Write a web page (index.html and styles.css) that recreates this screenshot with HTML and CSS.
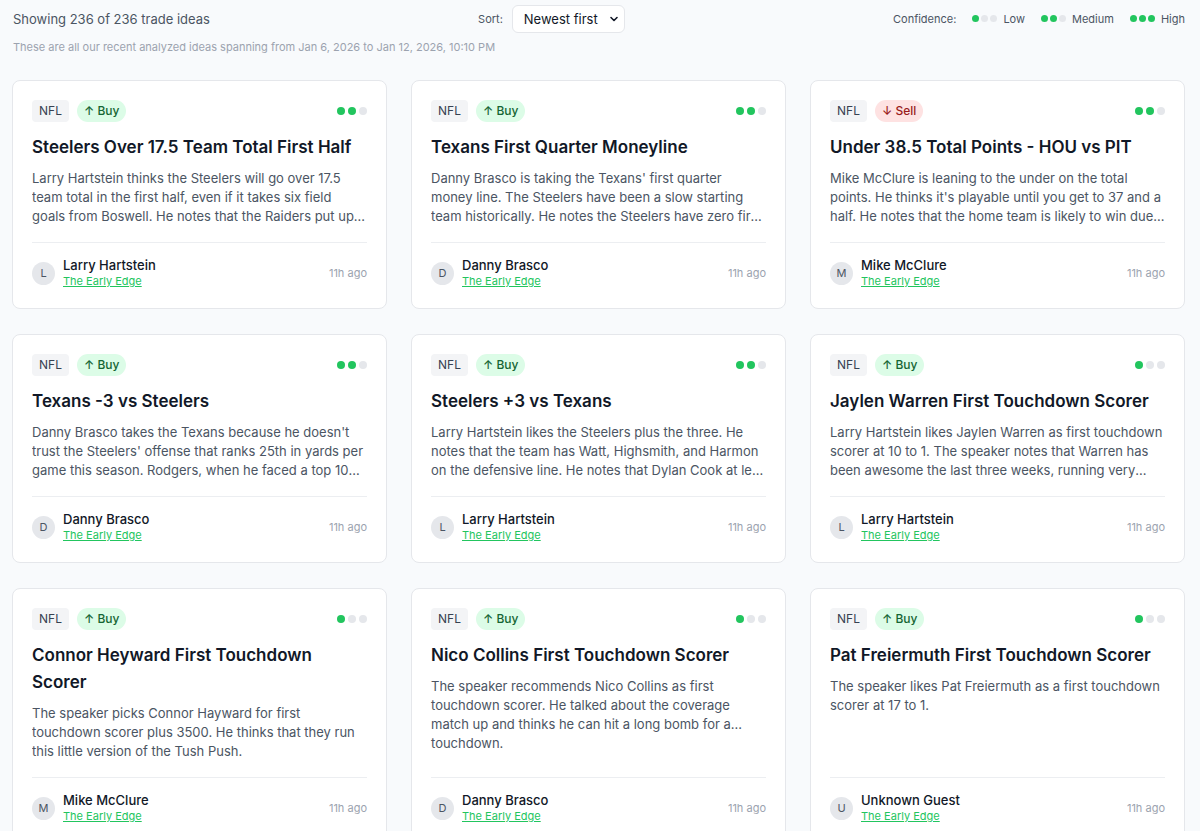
FILE: index.html
```html
<!DOCTYPE html>
<html lang="en">
<head>
  <meta charset="UTF-8">
  <title>Trade Ideas</title>
  <link rel="stylesheet" href="styles.css">
</head>
<body>
  <!-- Toolbar -->
  <div class="toolbar">
    <div class="count">Showing 236 of 236 trade ideas</div>
    <div class="sort">
      <span class="sort-label">Sort:</span>
      <div class="select-wrap">
        <select class="sort-select">
          <option>Newest first</option>
          <option>Oldest first</option>
          <option>Highest confidence</option>
        </select>
        <svg class="chevron" width="10" height="10" viewBox="0 0 10 10"><path d="M2 3.5 L5 6.5 L8 3.5" fill="none" stroke="#111827" stroke-width="1.6" stroke-linecap="round" stroke-linejoin="round"/></svg>
      </div>
    </div>
    <div class="legend">
      <span>Confidence:</span>
      <span class="legend-item"><span class="dots small"><i class="on"></i><i></i><i></i></span>Low</span>
      <span class="legend-item"><span class="dots small"><i class="on"></i><i class="on"></i><i></i></span>Medium</span>
      <span class="legend-item"><span class="dots small"><i class="on"></i><i class="on"></i><i class="on"></i></span>High</span>
    </div>
  </div>
  <p class="subtitle">These are all our recent analyzed ideas spanning from Jan 6, 2026 to Jan 12, 2026, 10:10 PM</p>

  <!-- Idea Cards -->
  <main class="grid">
    <div class="card">
      <div class="card-top">
        <span class="tag">NFL</span>
        <span class="pill buy">↑ Buy</span>
        <span class="dots"><i class="on"></i><i class="on"></i><i></i></span>
      </div>
      <h2 class="card-title">Steelers Over 17.5 Team Total First Half</h2>
      <p class="desc clamp">Larry Hartstein thinks the Steelers will go over 17.5 team total in the first half, even if it takes six field goals from Boswell. He notes that the Raiders put up points against them last time out.</p>
      <div class="card-footer">
        <span class="avatar">L</span>
        <div class="who">
          <div class="name">Larry Hartstein</div>
          <a class="source" href="#">The Early Edge</a>
        </div>
        <span class="time">11h ago</span>
      </div>
    </div>

    <div class="card">
      <div class="card-top">
        <span class="tag">NFL</span>
        <span class="pill buy">↑ Buy</span>
        <span class="dots"><i class="on"></i><i class="on"></i><i></i></span>
      </div>
      <h2 class="card-title">Texans First Quarter Moneyline</h2>
      <p class="desc clamp">Danny Brasco is taking the Texans' first quarter money line. The Steelers have been a slow starting team historically. He notes the Steelers have zero first quarter points in recent games.</p>
      <div class="card-footer">
        <span class="avatar">D</span>
        <div class="who">
          <div class="name">Danny Brasco</div>
          <a class="source" href="#">The Early Edge</a>
        </div>
        <span class="time">11h ago</span>
      </div>
    </div>

    <div class="card">
      <div class="card-top">
        <span class="tag">NFL</span>
        <span class="pill sell">↓ Sell</span>
        <span class="dots"><i class="on"></i><i class="on"></i><i></i></span>
      </div>
      <h2 class="card-title">Under 38.5 Total Points - HOU vs PIT</h2>
      <p class="desc clamp">Mike McClure is leaning to the under on the total points. He thinks it's playable until you get to 37 and a half. He notes that the home team is likely to win due to the defense.</p>
      <div class="card-footer">
        <span class="avatar">M</span>
        <div class="who">
          <div class="name">Mike McClure</div>
          <a class="source" href="#">The Early Edge</a>
        </div>
        <span class="time">11h ago</span>
      </div>
    </div>

    <div class="card">
      <div class="card-top">
        <span class="tag">NFL</span>
        <span class="pill buy">↑ Buy</span>
        <span class="dots"><i class="on"></i><i class="on"></i><i></i></span>
      </div>
      <h2 class="card-title">Texans -3 vs Steelers</h2>
      <p class="desc clamp">Danny Brasco takes the Texans because he doesn't trust the Steelers' offense that ranks 25th in yards per game this season. Rodgers, when he faced a top 10 defense, struggled badly.</p>
      <div class="card-footer">
        <span class="avatar">D</span>
        <div class="who">
          <div class="name">Danny Brasco</div>
          <a class="source" href="#">The Early Edge</a>
        </div>
        <span class="time">11h ago</span>
      </div>
    </div>

    <div class="card">
      <div class="card-top">
        <span class="tag">NFL</span>
        <span class="pill buy">↑ Buy</span>
        <span class="dots"><i class="on"></i><i class="on"></i><i></i></span>
      </div>
      <h2 class="card-title">Steelers +3 vs Texans</h2>
      <p class="desc clamp">Larry Hartstein likes the Steelers plus the three. He notes that the team has Watt, Highsmith, and Harmon on the defensive line. He notes that Dylan Cook at left tackle is a weakness.</p>
      <div class="card-footer">
        <span class="avatar">L</span>
        <div class="who">
          <div class="name">Larry Hartstein</div>
          <a class="source" href="#">The Early Edge</a>
        </div>
        <span class="time">11h ago</span>
      </div>
    </div>

    <div class="card">
      <div class="card-top">
        <span class="tag">NFL</span>
        <span class="pill buy">↑ Buy</span>
        <span class="dots"><i class="on"></i><i></i><i></i></span>
      </div>
      <h2 class="card-title">Jaylen Warren First Touchdown Scorer</h2>
      <p class="desc clamp">Larry Hartstein likes Jaylen Warren as first touchdown scorer at 10 to 1. The speaker notes that Warren has been awesome the last three weeks, running very hard between the tackles.</p>
      <div class="card-footer">
        <span class="avatar">L</span>
        <div class="who">
          <div class="name">Larry Hartstein</div>
          <a class="source" href="#">The Early Edge</a>
        </div>
        <span class="time">11h ago</span>
      </div>
    </div>

    <div class="card">
      <div class="card-top">
        <span class="tag">NFL</span>
        <span class="pill buy">↑ Buy</span>
        <span class="dots"><i class="on"></i><i></i><i></i></span>
      </div>
      <h2 class="card-title">Connor Heyward First Touchdown Scorer</h2>
      <p class="desc clamp">The speaker picks Connor Hayward for first touchdown scorer plus 3500. He thinks that they run this little version of the Tush Push.</p>
      <div class="card-footer">
        <span class="avatar">M</span>
        <div class="who">
          <div class="name">Mike McClure</div>
          <a class="source" href="#">The Early Edge</a>
        </div>
        <span class="time">11h ago</span>
      </div>
    </div>

    <div class="card">
      <div class="card-top">
        <span class="tag">NFL</span>
        <span class="pill buy">↑ Buy</span>
        <span class="dots"><i class="on"></i><i></i><i></i></span>
      </div>
      <h2 class="card-title">Nico Collins First Touchdown Scorer</h2>
      <p class="desc">The speaker recommends Nico Collins as first touchdown scorer. He talked about the coverage match up and thinks he can hit a long bomb for a... touchdown.</p>
      <div class="card-footer">
        <span class="avatar">D</span>
        <div class="who">
          <div class="name">Danny Brasco</div>
          <a class="source" href="#">The Early Edge</a>
        </div>
        <span class="time">11h ago</span>
      </div>
    </div>

    <div class="card">
      <div class="card-top">
        <span class="tag">NFL</span>
        <span class="pill buy">↑ Buy</span>
        <span class="dots"><i class="on"></i><i></i><i></i></span>
      </div>
      <h2 class="card-title">Pat Freiermuth First Touchdown Scorer</h2>
      <p class="desc clamp">The speaker likes Pat Freiermuth as a first touchdown scorer at 17 to 1.</p>
      <div class="card-footer">
        <span class="avatar">U</span>
        <div class="who">
          <div class="name">Unknown Guest</div>
          <a class="source" href="#">The Early Edge</a>
        </div>
        <span class="time">11h ago</span>
      </div>
    </div>
  </main>
</body>
</html>
```

FILE: styles.css
```css
:root {
  --bg: #f8fafc;
  --border: #e5e7eb;
  --text: #111827;
  --muted: #4b5563;
  --light: #9ca3af;
  --green: #22c55e;
  --dot-off: #e5e7eb;
}

* {
  margin: 0;
  padding: 0;
  box-sizing: border-box;
}

body {
  font-family: Inter, 'Noto Sans', sans-serif;
  background-color: var(--bg);
  color: var(--text);
  padding: 5px 15px 0 12px;
}

.toolbar {
  display: flex;
  align-items: center;
  justify-content: space-between;
  height: 27px;
}

.count {
  font-size: 13px;
  color: var(--muted);
  padding-left: 1px;
}

.sort {
  display: flex;
  align-items: center;
  gap: 9px;
}

.sort-label {
  font-size: 11px;
  color: var(--muted);
}

.select-wrap {
  position: relative;
}

.sort-select {
  appearance: none;
  -webkit-appearance: none;
  width: 113px;
  height: 28px;
  padding: 0 20px 0 11px;
  font-family: inherit;
  font-size: 13px;
  color: var(--text);
  background-color: white;
  border: 1px solid var(--border);
  border-radius: 6px;
}

.chevron {
  position: absolute;
  right: 6px;
  top: 9px;
  pointer-events: none;
}

.legend {
  display: flex;
  align-items: center;
  gap: 16px;
  font-size: 11px;
  color: var(--muted);
}

.legend-item {
  display: flex;
  align-items: center;
  gap: 6px;
}

.dots {
  display: flex;
  gap: 3px;
}

.dots i {
  width: 8px;
  height: 8px;
  border-radius: 50%;
  background-color: var(--dot-off);
}

.dots i.on {
  background-color: var(--green);
}

.dots.small {
  gap: 2px;
}

.dots.small i {
  width: 7px;
  height: 7px;
}

.subtitle {
  font-size: 11px;
  color: var(--light);
  margin-top: 8px;
  padding-left: 1px;
}

.grid {
  display: grid;
  grid-template-columns: repeat(3, 1fr);
  column-gap: 24px;
  row-gap: 25px;
  margin-top: 26px;
}

.card {
  background-color: white;
  border: 1px solid var(--border);
  border-radius: 8px;
  padding: 19px 19px 19px;
  display: flex;
  flex-direction: column;
}

.card-top {
  display: flex;
  align-items: center;
  gap: 8px;
  height: 22px;
}

.tag {
  background-color: #f3f4f6;
  color: #374151;
  font-size: 12px;
  height: 22px;
  line-height: 22px;
  padding: 0 7px;
  border-radius: 4px;
}

.pill {
  font-size: 12px;
  font-weight: 500;
  height: 22px;
  line-height: 22px;
  padding: 0 7px;
  border-radius: 11px;
}

.pill.buy {
  background-color: #dcfce7;
  color: #166534;
}

.pill.sell {
  background-color: #fee2e2;
  color: #991b1b;
}

.card-top .dots {
  margin-left: auto;
}

.card-title {
  font-size: 17px;
  font-weight: 600;
  line-height: 27px;
  margin-top: 12px;
  color: var(--text);
}

.desc {
  font-size: 13px;
  line-height: 19px;
  color: var(--muted);
  margin-top: 8px;
  margin-bottom: 16px;
}

.desc.clamp {
  display: -webkit-box;
  -webkit-line-clamp: 3;
  -webkit-box-orient: vertical;
  overflow: hidden;
}

.card-footer {
  margin-top: auto;
  border-top: 1px solid #eceef1;
  display: flex;
  align-items: center;
  gap: 8px;
  padding-top: 14px;
}

.avatar {
  width: 23px;
  height: 23px;
  border-radius: 50%;
  background-color: #e5e7eb;
  color: #4b5563;
  font-size: 11px;
  display: flex;
  align-items: center;
  justify-content: center;
}

.who {
  flex: 1;
}

.name {
  font-size: 13px;
  font-weight: 500;
  line-height: 17px;
}

.source {
  display: block;
  width: fit-content;
  font-size: 11px;
  line-height: 15px;
  color: var(--green);
  text-decoration: underline;
}

.time {
  font-size: 11px;
  color: var(--light);
}
```
